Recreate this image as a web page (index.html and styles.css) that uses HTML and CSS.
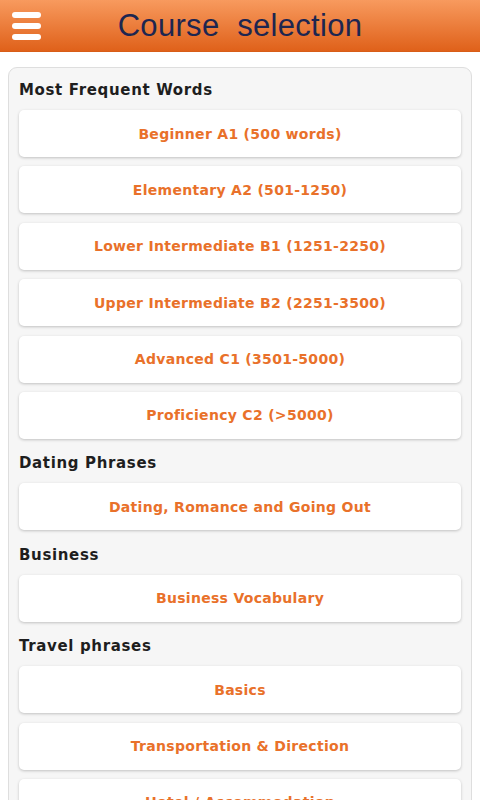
FILE: index.html
```html
<!DOCTYPE html>
<html>
<head>
<meta charset="utf-8">
<link rel="stylesheet" href="styles.css">
</head>
<body>
<header class="topbar">
  <div class="menu"><span></span><span></span><span></span></div>
  <h1 class="title">Course&nbsp; selection</h1>
</header>
<main class="card">
  <h2 class="section">Most Frequent Words</h2>
  <a class="btn">Beginner A1 (500 words)</a>
  <a class="btn">Elementary A2 (501-1250)</a>
  <a class="btn">Lower Intermediate B1 (1251-2250)</a>
  <a class="btn">Upper Intermediate B2 (2251-3500)</a>
  <a class="btn">Advanced C1 (3501-5000)</a>
  <a class="btn">Proficiency C2 (&gt;5000)</a>
  <h2 class="section">Dating Phrases</h2>
  <a class="btn">Dating, Romance and Going Out</a>
  <h2 class="section">Business</h2>
  <a class="btn">Business Vocabulary</a>
  <h2 class="section">Travel phrases</h2>
  <a class="btn">Basics</a>
  <a class="btn">Transportation &amp; Direction</a>
  <a class="btn">Hotel / Accommodation</a>
  <a class="btn">Eating Out</a>
</main>
</body>
</html>
```
FILE: styles.css
```css
html, body { margin: 0; padding: 0; }
body {
  background: #fff;
  font-family: "DejaVu Sans", sans-serif;
  overflow: hidden;
  height: 800px;
}
.topbar {
  height: 52px;
  background: linear-gradient(#f89a5e, #df611a);
  display: flex;
  align-items: center;
  border-bottom: 1px solid #d85d18;
  box-sizing: border-box;
}
.menu {
  display: flex;
  flex-direction: column;
  gap: 5px;
  margin-left: 12px;
  margin-top: 1px;
}
.menu span {
  display: block;
  width: 29px;
  height: 6px;
  border-radius: 3px;
  background: #fff;
}
.title {
  margin: 0;
  flex: 1;
  text-align: center;
  margin-right: 41px;
  font-family: "Liberation Sans", sans-serif;
  font-weight: normal;
  font-size: 31px;
  color: #1d2650;
  letter-spacing: 0.3px;
}
.card {
  margin: 15px 8px 0 8px;
  background: #f6f6f6;
  border: 1px solid #dedede;
  border-radius: 9px;
  padding: 7px 10px 0 10px;
  display: flex;
  flex-direction: column;
}
.section {
  margin: 0;
  padding: 5px 0 10px 0;
  line-height: 20px;
  font-size: 15px;
  font-weight: bold;
  color: #1e1e1e;
  letter-spacing: 0.65px;
}
.btn {
  display: flex;
  align-items: center;
  justify-content: center;
  height: 47px;
  margin-bottom: 9.4px;
  background: #fff;
  border-radius: 5px;
  box-shadow: 0 1px 3px rgba(0,0,0,0.22);
  color: #e9712a;
  font-size: 14px;
  font-weight: bold;
  letter-spacing: 0.3px;
}
```
